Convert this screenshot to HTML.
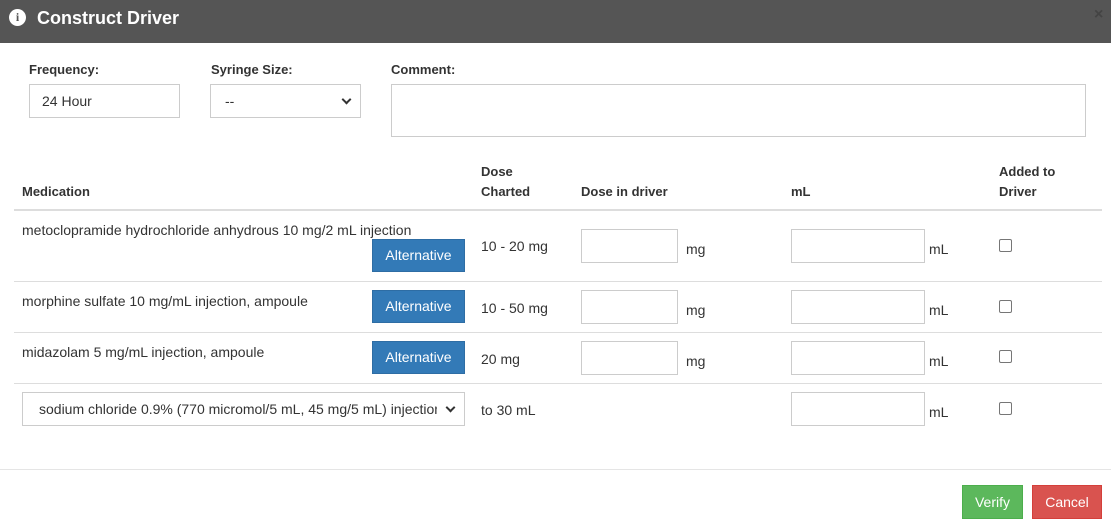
<!DOCTYPE html>
<html><head><meta charset="utf-8"><style>
*{box-sizing:border-box;margin:0;padding:0}
body{width:1111px;height:527px;background:#fff;font-family:"Liberation Sans",Arial,sans-serif;font-size:14px;color:#333;position:relative;overflow:hidden}
.a{position:absolute}
.hdr{left:0;top:0;width:1111px;height:43px;background:#555}
.b{font-weight:bold;font-size:13px;color:#333}
.inp{position:absolute;border:1px solid #ccc;background:#fff}
.t{position:absolute;font-size:14px;color:#333;white-space:nowrap}
.btn{position:absolute;background:#337ab7;border:1px solid #2e6da4;color:#fff;font-size:14px;text-align:center;line-height:31px;width:93px;height:33px}
.hr{position:absolute;left:14px;width:1088px;height:1px;background:#ddd}
.cb{position:absolute;width:13px;height:13px;border:1px solid #767676;border-radius:2px;background:#fff}
.sel:after{content:"";position:absolute;right:10px;top:11px;width:5px;height:5px;border-right:2px solid #333;border-bottom:2px solid #333;transform:rotate(45deg)}
</style></head><body>
<div class="a hdr"></div>
<div class="a" style="left:9px;top:9px;width:17px;height:17px;border-radius:50%;background:#fff;color:#555;font:bold 12px 'Liberation Serif',serif;text-align:center;line-height:17px">i</div>
<div class="a" style="left:37px;top:8px;color:#fff;font-weight:bold;font-size:18px">Construct Driver</div>
<div class="a" style="left:1094px;top:6px;color:#444;font-weight:bold;font-size:16px">×</div>

<div class="a b" style="left:29px;top:62px">Frequency:</div>
<div class="a b" style="left:211px;top:62px">Syringe Size:</div>
<div class="a b" style="left:391px;top:62px">Comment:</div>
<div class="inp" style="left:29px;top:84px;width:151px;height:34px"></div>
<div class="t" style="left:42px;top:93px">24 Hour</div>
<div class="inp sel" style="left:210px;top:84px;width:151px;height:34px"></div>
<div class="t" style="left:225px;top:93px">--</div>
<div class="inp" style="left:391px;top:84px;width:695px;height:53px"></div>

<div class="a b" style="left:22px;top:184px">Medication</div>
<div class="a b" style="left:481px;top:162px;line-height:20px">Dose<br>Charted</div>
<div class="a b" style="left:581px;top:184px">Dose in driver</div>
<div class="a b" style="left:791px;top:184px">mL</div>
<div class="a b" style="left:999px;top:162px;line-height:20px">Added to<br>Driver</div>
<div class="hr" style="top:209px;height:2px"></div>

<div class="t" style="left:22px;top:222px">metoclopramide hydrochloride anhydrous 10 mg/2 mL injection</div>
<div class="btn" style="left:372px;top:239px">Alternative</div>
<div class="t" style="left:481px;top:238px">10 - 20 mg</div>
<div class="inp" style="left:581px;top:229px;width:97px;height:34px"></div><div class="t" style="left:686px;top:241px">mg</div>
<div class="inp" style="left:791px;top:229px;width:134px;height:34px"></div><div class="t" style="left:929px;top:241px">mL</div>
<div class="cb" style="left:999px;top:239px"></div>
<div class="hr" style="top:281px"></div>

<div class="t" style="left:22px;top:293px">morphine sulfate 10 mg/mL injection, ampoule</div>
<div class="btn" style="left:372px;top:290px">Alternative</div>
<div class="t" style="left:481px;top:300px">10 - 50 mg</div>
<div class="inp" style="left:581px;top:290px;width:97px;height:34px"></div><div class="t" style="left:686px;top:302px">mg</div>
<div class="inp" style="left:791px;top:290px;width:134px;height:34px"></div><div class="t" style="left:929px;top:302px">mL</div>
<div class="cb" style="left:999px;top:300px"></div>
<div class="hr" style="top:332px"></div>

<div class="t" style="left:22px;top:344px">midazolam 5 mg/mL injection, ampoule</div>
<div class="btn" style="left:372px;top:341px">Alternative</div>
<div class="t" style="left:481px;top:351px">20 mg</div>
<div class="inp" style="left:581px;top:341px;width:97px;height:34px"></div><div class="t" style="left:686px;top:353px">mg</div>
<div class="inp" style="left:791px;top:341px;width:134px;height:34px"></div><div class="t" style="left:929px;top:353px">mL</div>
<div class="cb" style="left:999px;top:350px"></div>
<div class="hr" style="top:383px"></div>

<div class="inp sel" style="left:22px;top:392px;width:443px;height:34px;overflow:hidden"><div class="t" style="left:16px;top:8px;width:398px;overflow:hidden">sodium chloride 0.9% (770 micromol/5 mL, 45 mg/5 mL) injection</div></div>
<div class="t" style="left:481px;top:402px">to 30 mL</div>
<div class="inp" style="left:791px;top:392px;width:134px;height:34px"></div><div class="t" style="left:929px;top:404px">mL</div>
<div class="cb" style="left:999px;top:402px"></div>

<div class="a" style="left:0;top:469px;width:1111px;height:1px;background:#e5e5e5"></div>
<div class="a" style="left:962px;top:485px;width:61px;height:34px;background:#5cb85c;border:1px solid #4cae4c;color:#fff;text-align:center;line-height:32px">Verify</div>
<div class="a" style="left:1032px;top:485px;width:70px;height:34px;background:#d9534f;border:1px solid #d43f3a;color:#fff;text-align:center;line-height:32px">Cancel</div>
</body></html>
